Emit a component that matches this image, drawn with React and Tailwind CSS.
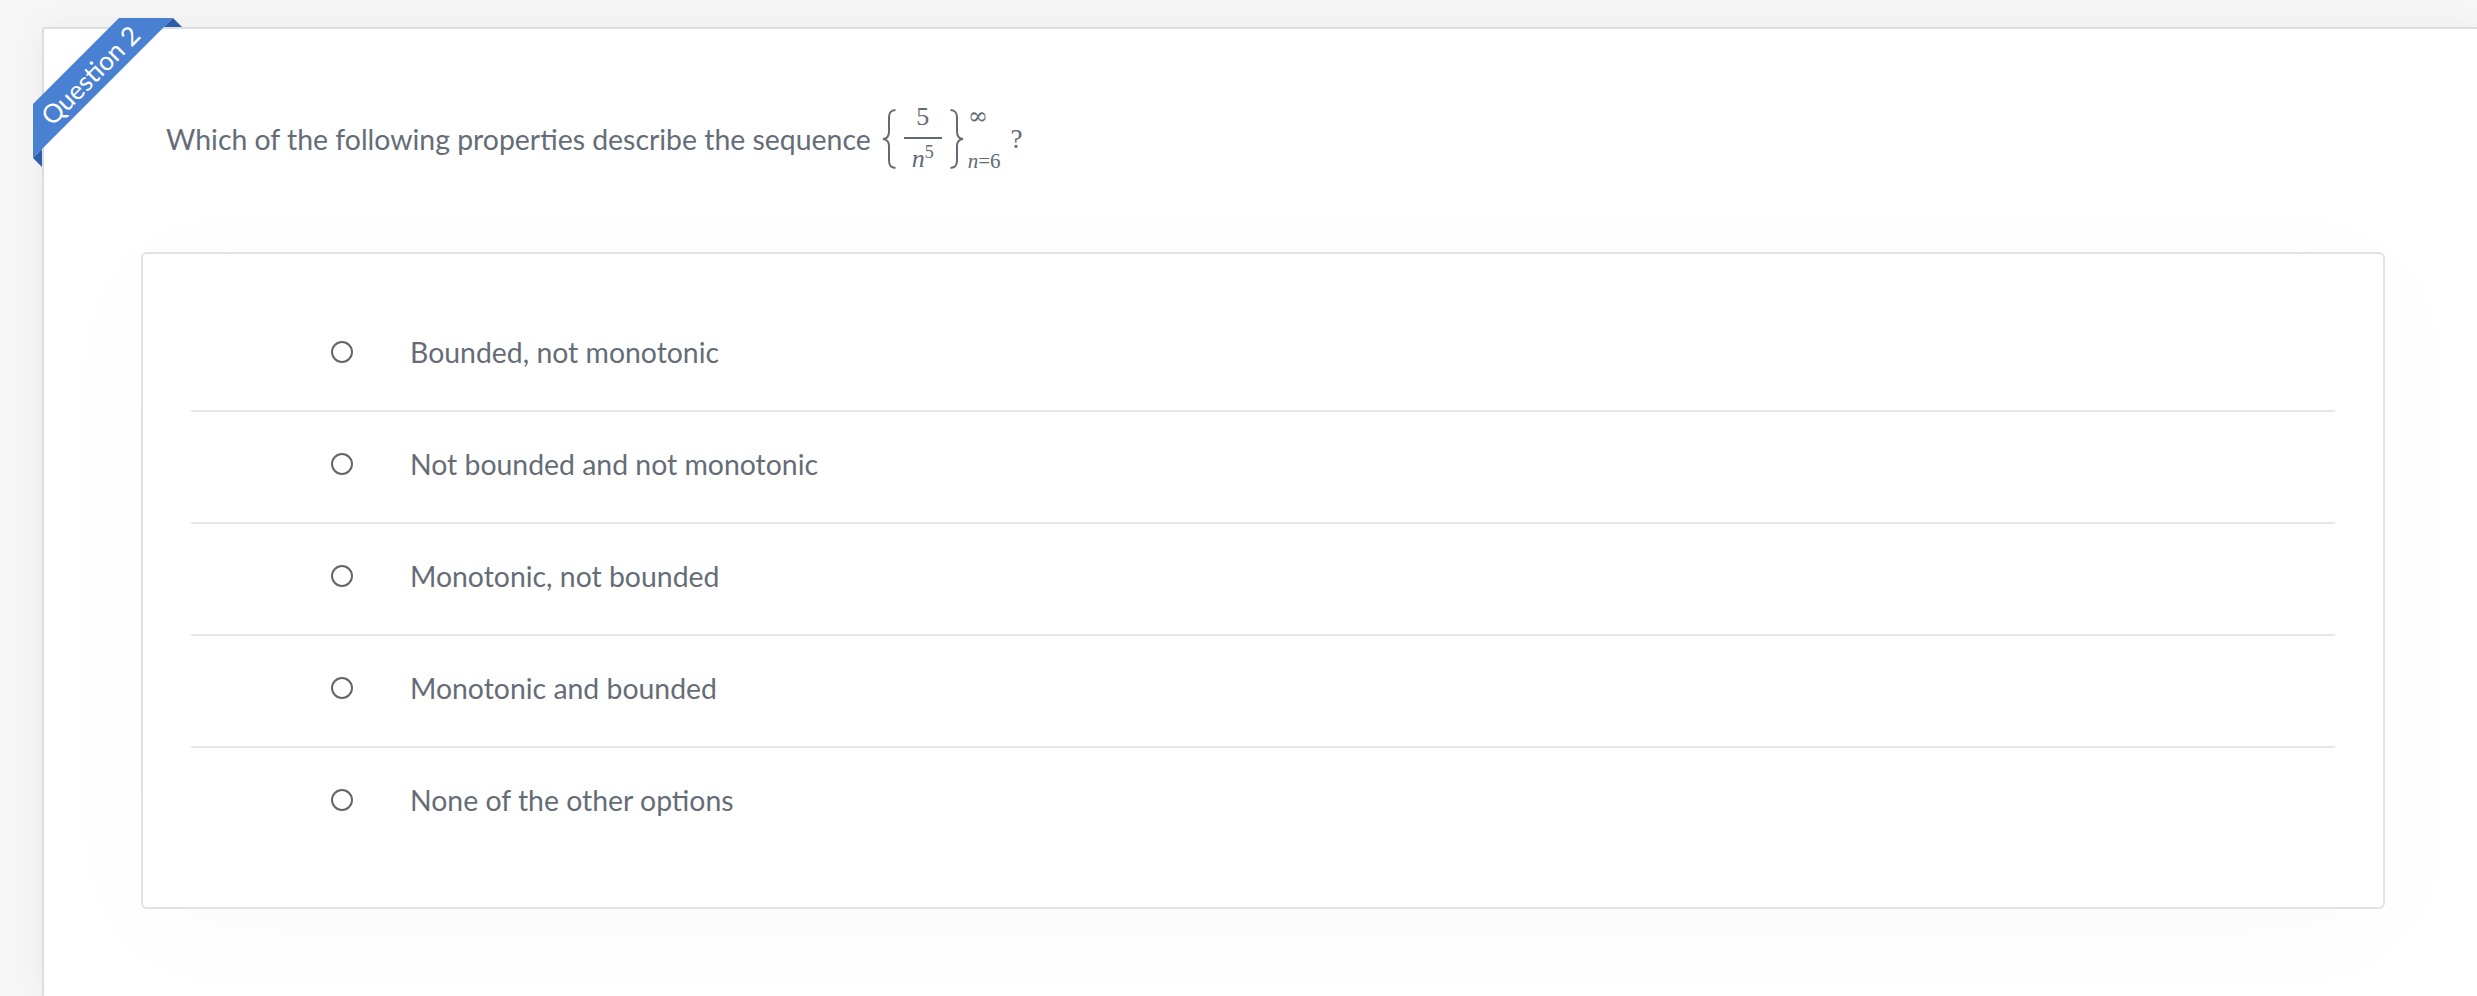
import React from 'react';

const OPTIONS = [
  'Bounded, not monotonic',
  'Not bounded and not monotonic',
  'Monotonic, not bounded',
  'Monotonic and bounded',
  'None of the other options',
];

// Corner ribbon with the question number
const Ribbon = ({ label }) => (
  <div className="absolute -left-[11px] -top-[11px] z-10 h-[160px] w-[160px] pointer-events-none">
    <svg width="160" height="160" viewBox="0 0 160 160" className="absolute left-0 top-0">
      <polygon points="86,0 140,0 0,140 0,86" fill="#4a80d2" />
      <polygon points="140,0 131,9 149,9" fill="#2c5dab" />
      <polygon points="0,140 9,131 9,149" fill="#2c5dab" />
    </svg>
    <div className="absolute left-[-13.5px] top-[41.5px] flex h-[30px] w-[140px] -rotate-45 items-center justify-center text-[26px] leading-none text-white">
      {label}
    </div>
  </div>
);

const Brace = ({ flip }) => (
  <svg width="17" height="60" viewBox="0 0 17 60" className={flip ? '-scale-x-100' : ''}>
    <path
      d="M14.5 1 C9.5 1.5 8 3.5 8 8.5 L8 23 C8 27.5 6 29.5 2 30 C6 30.5 8 32.5 8 37 L8 51.5 C8 56.5 9.5 58.5 14.5 59"
      fill="none"
      stroke="#626b75"
      strokeWidth="2"
    />
  </svg>
);

const Sequence = () => (
  <div className="ml-[10px] flex items-center font-['Liberation_Serif',serif] text-[#626b75]">
    <Brace />
    <div className="mx-[6px] flex flex-col items-center">
      <span className="pb-[7px] text-[26px] leading-[26px]">5</span>
      <span className="h-[1.7px] w-[38px] bg-[#626b75]" />
      <span className="pt-[7px] text-[26px] leading-[26px]">
        <i>n</i>
        <span className="relative -top-[9px] text-[18px]">5</span>
      </span>
    </div>
    <Brace flip />
    <div className="ml-[3px] flex h-[66px] flex-col justify-between">
      <span className="font-['DejaVu_Serif',serif] text-[24px] leading-[20px]">∞</span>
      <span className="text-[21px] leading-[22px]">
        <i>n</i>=6
      </span>
    </div>
    <span className="ml-[10px] text-[27px] leading-none">?</span>
  </div>
);

const OptionRow = ({ text, first }) => (
  <div className={`flex items-center pt-[40px] pb-[46px] ${first ? '' : 'border-t-2 border-[#e4e7eb]'}`}>
    <span className="ml-[140px] h-[22px] w-[22px] shrink-0 rounded-full border-2 border-[#636566]" />
    <span className="ml-[57px] text-[28.4px] leading-[24px] text-[#646d77]">{text}</span>
  </div>
);

export default function App() {
  return (
    <div className="h-[996px] w-full overflow-hidden bg-[#f6f6f6] pl-[42px] pt-[27px] font-['Lato',sans-serif]">
      <div className="relative h-full rounded-tl-[3px] border-l-2 border-t-2 border-[#dcdddf] bg-white shadow-[0_0_30px_rgba(0,0,0,0.05)]">
        <Ribbon label="Question 2" />

        {/* Question text */}
        <div className="mt-[75px] flex h-[70px] items-center pl-[122px]">
          <span className="text-[28.4px] text-[#646d77]">Which of the following properties describe the sequence</span>
          <Sequence />
        </div>

        {/* Answer options */}
        <div className="ml-[97px] mt-[78px] w-[2244px] rounded-md border-2 border-[#dfe2e6] bg-white px-[48px] pt-[46px] pb-[49px] shadow-[0_20px_120px_rgba(0,0,0,0.025)]">
          {OPTIONS.map((opt, i) => (
            <OptionRow key={opt} text={opt} first={i === 0} />
          ))}
        </div>
      </div>
    </div>
  );
}
